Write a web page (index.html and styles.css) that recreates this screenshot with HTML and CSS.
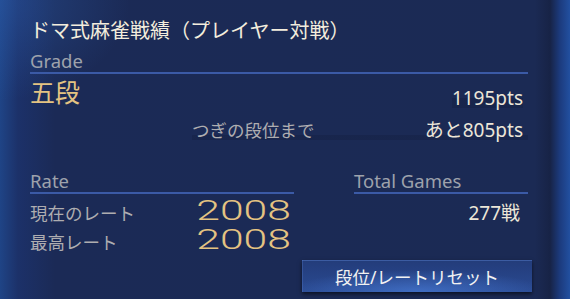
FILE: index.html
```html
<!DOCTYPE html>
<html lang="ja">
<head>
    <meta charset="UTF-8">
    <title>ドマ式麻雀戦績</title>
    <link rel="stylesheet" href="styles.css">
</head>
<body>
    <div class="panel">
        <h1 class="title">ドマ式麻雀戦績（プレイヤー対戦）</h1>

        <section class="grade">
            <div class="head">Grade</div>
            <div class="grade-main">
                <span class="rank">五段</span>
                <span class="pts">1195pts</span>
            </div>
            <div class="grade-next">
                <span class="label">つぎの段位まで</span>
                <span class="pts">あと805pts</span>
            </div>
        </section>

        <div class="columns">
            <section class="rate">
                <div class="head">Rate</div>
                <div class="rate-row">
                    <span class="label">現在のレート</span>
                    <span class="num">2008</span>
                </div>
                <div class="rate-row">
                    <span class="label">最高レート</span>
                    <span class="num">2008</span>
                </div>
            </section>
            <section class="games">
                <div class="head">Total Games</div>
                <div class="games-val">277戦</div>
            </section>
        </div>

        <div class="actions">
            <button class="reset">段位/レートリセット</button>
        </div>
    </div>
</body>
</html>
```

FILE: styles.css
```css
body {
    margin: 0;
    height: 299px;
    overflow: hidden;
    font-family: "Noto Sans", "Noto Sans CJK JP", sans-serif;
    color: #ece6d8;
    background:
        radial-gradient(ellipse 130px 100px at 0 0, rgba(45, 95, 175, 0.45), transparent),
        linear-gradient(to right, #1f4486 0, #1c3169 18px, #1b2a56 55px, #1b2a54 535px, #172346 550px, #1c3b7e 560px, #2250a0 570px);
}

.panel {
    width: 498px;
    padding-left: 30px;
}

.title {
    margin: 0;
    padding-top: 21px;
    font-size: 20px;
    line-height: 20px;
    font-weight: normal;
    color: #f3eddd;
}

.head {
    margin-top: 10px;
    height: 20px;
    padding-bottom: 1px;
    font-size: 18.5px;
    line-height: 20px;
    color: #9ea2ac;
    border-bottom: 2px solid #3b5aa6;
}

.grade-main {
    display: flex;
    justify-content: space-between;
    align-items: flex-start;
    height: 29px;
    margin-top: 6px;
    padding-right: 5px;
}

.rank {
    font-size: 25px;
    line-height: 25px;
    color: #e4c382;
}

.pts {
    font-size: 19px;
    line-height: 20px;
}

.grade-main .pts {
    padding-top: 8px;
    background: linear-gradient(to bottom, transparent 18px, rgba(10, 16, 38, 0.18) 18px) no-repeat;
}

.grade-next {
    display: flex;
    justify-content: space-between;
    margin: 11px 0 0 162px;
    padding-right: 5px;
    height: 20px;
    background: linear-gradient(to bottom, transparent 15px, rgba(10, 16, 38, 0.18) 15px, rgba(10, 16, 38, 0.18) 23px, transparent 23px);
}

.label {
    font-size: 17.5px;
    line-height: 20px;
    color: #aeadb0;
}

.columns {
    display: grid;
    grid-template-columns: 264px 174px;
    column-gap: 60px;
    margin-top: 21px;
}

.rate-row {
    display: flex;
    justify-content: space-between;
    align-items: baseline;
    height: 29px;
    line-height: 29px;
    padding-right: 3px;
}

.rate .head + .rate-row {
    margin-top: 5px;
}

.rate-row .label {
    line-height: 29px;
}

.num {
    display: inline-block;
    font-family: Roboto, "Liberation Sans", sans-serif;
    font-weight: 300;
    font-size: 27px;
    line-height: 20px;
    color: #e4c382;
    transform: scaleX(1.58);
    transform-origin: right center;
}

.games-val {
    margin-top: 5px;
    height: 29px;
    line-height: 29px;
    font-size: 19px;
    text-align: right;
    padding-right: 8px;
}

.actions {
    margin: 3px 0 0 272px;
}

.reset {
    display: block;
    width: 230px;
    height: 32px;
    padding: 0;
    border: none;
    font-family: "Noto Sans", "Noto Sans CJK JP", sans-serif;
    font-size: 17.5px;
    color: #f2f2f2;
    background:
        radial-gradient(ellipse 130px 22px at 50% 100%, rgba(70, 120, 210, 0.75), transparent),
        linear-gradient(to bottom, #233c7a, #2a4a92);
    box-shadow: 0 2px 4px rgba(0, 0, 0, 0.6), inset 0 1px 0 rgba(90, 130, 210, 0.45), inset 1px 0 0 rgba(90, 130, 210, 0.3);
}
```
